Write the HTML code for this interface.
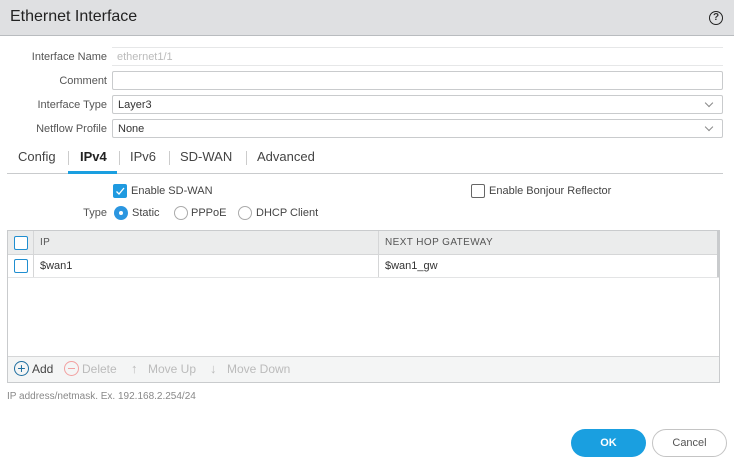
<!DOCTYPE html>
<html><head><style>
*{box-sizing:border-box;margin:0;padding:0}
body{width:734px;height:472px;background:#fff;font-family:"Liberation Sans",sans-serif;font-size:11px;color:#333;position:relative;overflow:hidden}
.a{position:absolute}
.hdr{left:0;top:0;width:734px;height:36px;background:#dfe0e2;border-bottom:1px solid #b9bcbf}
.lbl{width:107px;left:0;text-align:right;color:#555;font-size:11px}
.in{left:112px;width:611px;height:19px;border:1px solid #c9cbcd;border-radius:2px;padding:3px 5px;font-size:11px;color:#333}
.cb{width:14px;height:14px;border:1.5px solid #1f8ed0;border-radius:2px;background:#fff}
.rd{width:14px;height:14px;border:1px solid #aaa;border-radius:50%;background:#fff}
.chev{right:10px;top:4px;width:6px;height:6px;border-right:1px solid #888;border-bottom:1px solid #888;transform:rotate(45deg)}
.tab{top:149px;font-size:13px;color:#444}
.sep{top:151px;width:1px;height:14px;background:#ccc}
</style></head><body>
<div class="a hdr"></div>
<div class="a" style="left:10px;top:8px;font-size:16px;color:#222">Ethernet Interface</div>
<div class="a" style="left:709px;top:11px;width:14px;height:14px;border:1.5px solid #222;border-radius:50%;font-size:10px;font-weight:bold;text-align:center;line-height:11px">?</div>

<div class="a lbl" style="top:51px">Interface Name</div>
<div class="a" style="left:112px;top:47px;width:611px;height:19px;border-top:1px solid #e6e7e8;border-bottom:1px solid #e6e7e8;padding:3px 5px;color:#bbb">ethernet1/1</div>
<div class="a lbl" style="top:75px">Comment</div>
<div class="a in" style="top:71px"></div>
<div class="a lbl" style="top:99px">Interface Type</div>
<div class="a in" style="top:95px">Layer3<div class="a chev"></div></div>
<div class="a lbl" style="top:123px">Netflow Profile</div>
<div class="a in" style="top:119px">None<div class="a chev"></div></div>

<div class="a tab" style="left:18px">Config</div>
<div class="a sep" style="left:68px"></div>
<div class="a tab" style="left:80px;font-weight:bold;color:#222">IPv4</div>
<div class="a sep" style="left:119px"></div>
<div class="a tab" style="left:130px">IPv6</div>
<div class="a sep" style="left:169px"></div>
<div class="a tab" style="left:180px">SD-WAN</div>
<div class="a sep" style="left:246px"></div>
<div class="a tab" style="left:257px">Advanced</div>
<div class="a" style="left:7px;top:173px;width:716px;height:1px;background:#c9cbcd"></div>
<div class="a" style="left:68px;top:171px;width:49px;height:3px;background:#1a9fe0"></div>

<div class="a" style="left:113px;top:184px;width:14px;height:14px;background:#1f9ae0;border-radius:2px"><svg width="14" height="14"><path d="M3.5 7.5l2.5 2.5 5-6" stroke="#fff" stroke-width="1.3" fill="none"/></svg></div>
<div class="a" style="left:131px;top:185px;color:#444">Enable SD-WAN</div>
<div class="a" style="left:471px;top:184px;width:14px;height:14px;border:1px solid #666;border-radius:2px"></div>
<div class="a" style="left:489px;top:185px;color:#444">Enable Bonjour Reflector</div>

<div class="a lbl" style="top:207px">Type</div>
<div class="a" style="left:114px;top:206px;width:14px;height:14px;border-radius:50%;background:#2b96e0"><div class="a" style="left:5px;top:5px;width:4px;height:4px;border-radius:50%;background:#fff"></div></div>
<div class="a" style="left:132px;top:207px;color:#444">Static</div>
<div class="a rd" style="left:174px;top:206px"></div>
<div class="a" style="left:191px;top:207px;color:#444">PPPoE</div>
<div class="a rd" style="left:238px;top:206px"></div>
<div class="a" style="left:256px;top:207px;color:#444">DHCP Client</div>

<div class="a" style="left:7px;top:230px;width:713px;height:153px;border:1px solid #c9cbcd;background:#fff"></div>
<div class="a" style="left:8px;top:231px;width:711px;height:24px;background:#ebecec;border-bottom:1px solid #d5d6d7"></div>
<div class="a" style="left:717px;top:231px;width:2px;height:46px;background:#c9cbcd"></div>
<div class="a" style="left:33px;top:231px;width:1px;height:46px;background:#d5d6d7"></div>
<div class="a" style="left:378px;top:231px;width:1px;height:46px;background:#d5d6d7"></div>
<div class="a" style="left:8px;top:277px;width:711px;height:1px;background:#e3e4e5"></div>
<div class="a cb" style="left:14px;top:236px"></div>
<div class="a" style="left:40px;top:237px;font-size:10px;color:#555;letter-spacing:.4px">IP</div>
<div class="a" style="left:385px;top:237px;font-size:10px;color:#555;letter-spacing:.4px">NEXT HOP GATEWAY</div>
<div class="a cb" style="left:14px;top:259px"></div>
<div class="a" style="left:40px;top:260px">$wan1</div>
<div class="a" style="left:385px;top:260px">$wan1_gw</div>

<div class="a" style="left:8px;top:356px;width:711px;height:26px;background:#f4f5f5;border-top:1px solid #d5d6d7"></div>
<div class="a" style="left:14px;top:361px;width:15px;height:15px;border:1px solid #1f6fa0;border-radius:50%;color:#1f6fa0;text-align:center;line-height:12px;font-size:14px">+</div>
<div class="a" style="left:32px;top:362px;color:#444;font-size:12px">Add</div>
<div class="a" style="left:64px;top:361px;width:15px;height:15px;border:1px solid #f2a0a0;border-radius:50%"><div class="a" style="left:3px;top:6px;width:7px;height:1px;background:#f2a0a0"></div></div>
<div class="a" style="left:82px;top:362px;color:#bbb;font-size:12px">Delete</div>
<div class="a" style="left:131px;top:361px;color:#bbb;font-size:13px">↑</div>
<div class="a" style="left:148px;top:362px;color:#bbb;font-size:12px">Move Up</div>
<div class="a" style="left:210px;top:361px;color:#bbb;font-size:13px">↓</div>
<div class="a" style="left:227px;top:362px;color:#bbb;font-size:12px">Move Down</div>

<div class="a" style="left:7px;top:391px;color:#888;font-size:10px">IP address/netmask. Ex. 192.168.2.254/24</div>

<div class="a" style="left:571px;top:429px;width:75px;height:28px;border-radius:14px;background:#1a9fe0;color:#fff;font-weight:bold;text-align:center;line-height:28px">OK</div>
<div class="a" style="left:652px;top:429px;width:75px;height:28px;border-radius:14px;border:1px solid #c4c4c4;color:#555;text-align:center;line-height:26px">Cancel</div>
</body></html>
